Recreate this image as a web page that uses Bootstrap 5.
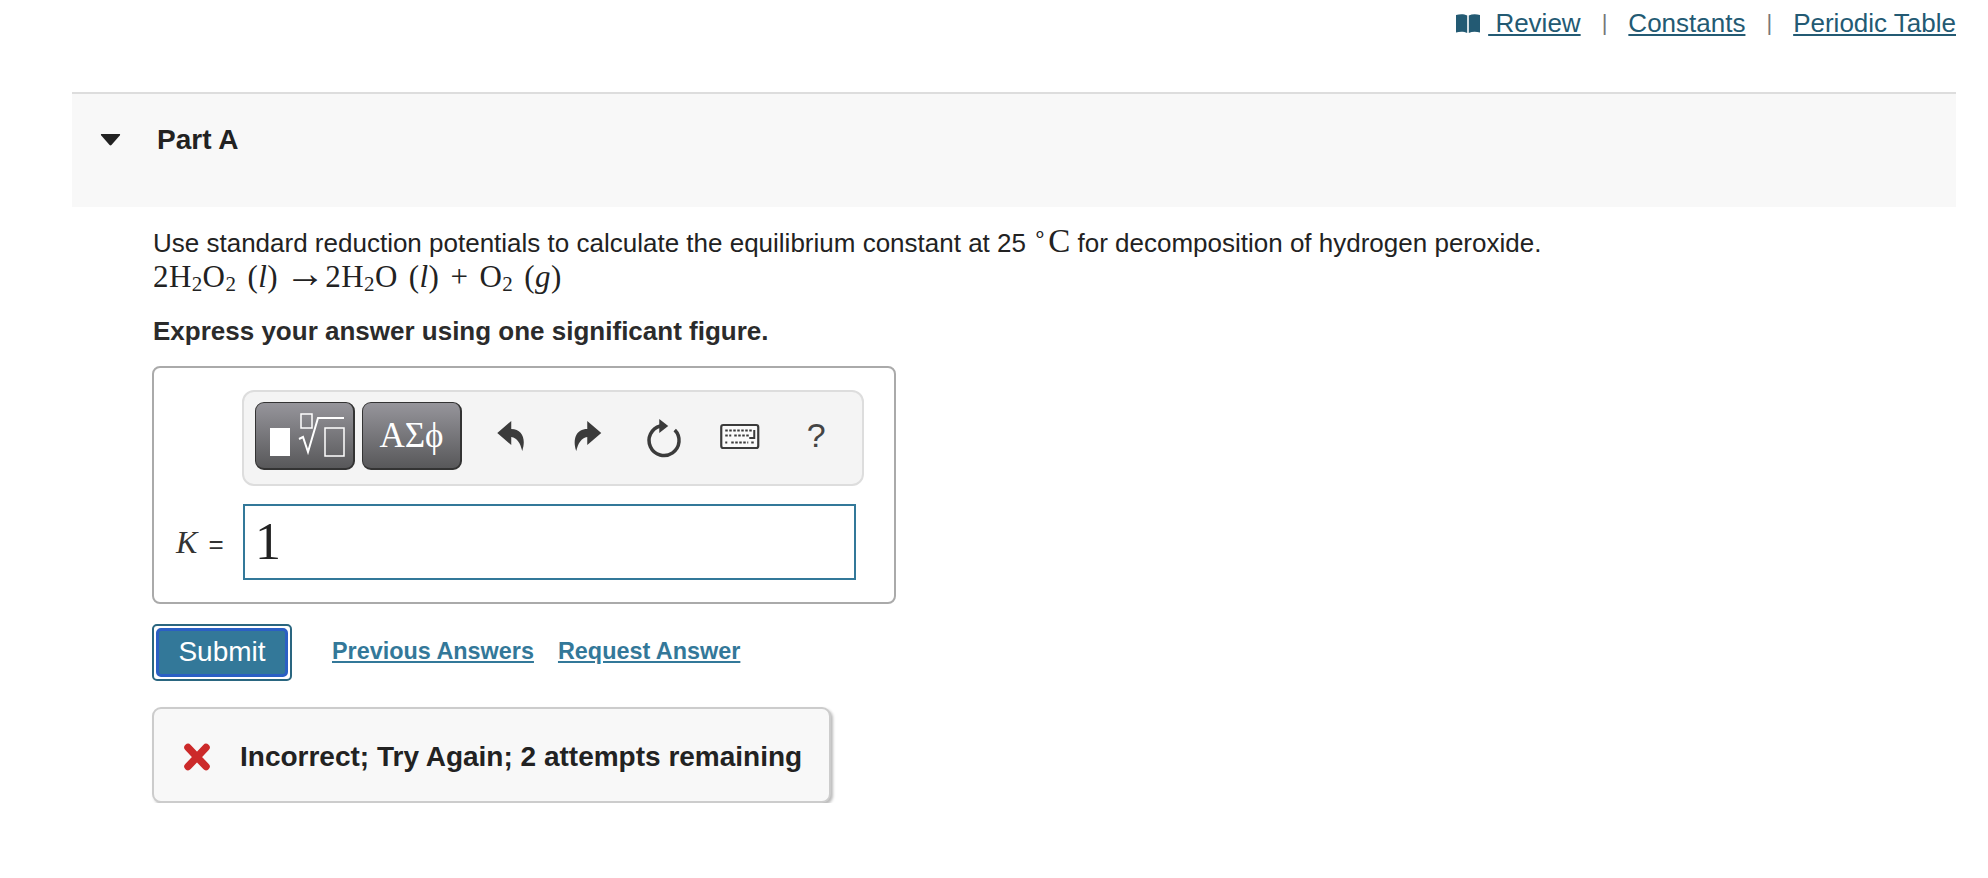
<!DOCTYPE html>
<html lang="en">
<head>
  <meta charset="UTF-8" />
  <title>Part A</title>
  <link href="https://cdn.jsdelivr.net/npm/bootstrap@5.3.3/dist/css/bootstrap.min.css" rel="stylesheet"/>
  <style>
    body {
      font-family: "Liberation Sans", Arial, sans-serif;
      font-size: 26px;
      color: #222;
      background: #fff;
      overflow: hidden;
    }
    .top-links {
      height: 92px;
      padding: 7px 32px 0 0;
      line-height: 32px;
      color: #777;
    }
    .top-links a { color: #235a73; }
    .top-sep { margin: 0 21px 0 21px; font-size: 22px; }
    .book-icon { margin-right: 8px; margin-top: 7px; }
    .part-wrap { margin: 0 32px 0 72px; }
    .part-head {
      height: 115px;
      background: #f8f8f8;
      border-top: 2px solid #ddd;
      padding: 28px 0 0 28px;
    }
    .tri-icon { margin-top: 12px; }
    .part-title { font-size: 28px; font-weight: 700; line-height: 36px; margin-left: 36px; color: #222; }
    .part-body { padding: 20px 0 0 81px; }
    .intro { line-height: 32px; }
    .deg { font-family: "Liberation Serif", serif; font-size: 33px; line-height: 0; }
    .deg sup { font-size: 22px; top: -.5em; margin-right: 1px; }
    .formula { font-family: "Liberation Serif", serif; font-size: 31px; line-height: 35px; letter-spacing: .4px; word-spacing: 3px; }
    .formula sub { font-size: 21px; bottom: -.2em; }
    .formula-arrow { font-size: 40px; line-height: 0; margin-left: 7px; }
    .hint { font-weight: 700; margin: 19px 0 0; line-height: 36px; color: #2b2b2b; }
    .answer-box {
      width: 744px;
      height: 238px;
      margin: 17px 0 0 -1px;
      border: 2px solid #aaa;
      border-radius: 8px;
      padding: 22px 29px 0 0;
    }
    .tool-bar {
      width: 622px;
      height: 96px;
      margin-left: 88px;
      background: #f4f4f4;
      border: 2px solid #ddd;
      border-radius: 12px;
      padding: 10px 0 0 11px;
    }
    .math-btn {
      width: 100px;
      height: 68px;
      padding: 0;
      margin-right: 7px;
      border: 1px solid #333;
      border-bottom-width: 2px;
      border-right-width: 2px;
      border-radius: 9px;
      background: linear-gradient(#96959b, #58585a);
      color: #fff;
      font-family: "Liberation Serif", serif;
      font-size: 35px;
      line-height: 1;
    }
    .tool-icon { width: 76.500px; height: 68px; flex: none; }
    .tool-first { margin-left: 3px; }
    .tool-q { font-size: 34px; color: #444; text-align: center; line-height: 66px; }
    .answer-row { margin-top: 18px; }
    .k-label { width: 89px; padding-left: 22px; font-size: 26px; white-space: nowrap; color: #333; line-height: 1; }
    .k-label i { font-family: "Liberation Serif", serif; font-size: 32px; margin-right: 4px; }
    .answer-input {
      width: 613px;
      height: 76px;
      border: 2px solid #337899;
      border-radius: 0;
      font-family: "Liberation Serif", serif;
      font-size: 52px;
      padding: 0 10px;
      color: #222;
    }
    .submit-row { margin: 20px 0 0 -1px; }
    .submit-outer {
      width: 140px;
      height: 57px;
      border: 2px solid #2a6680;
      border-radius: 5px;
      padding: 2px;
      background: #fff;
    }
    .submit-btn {
      width: 100%;
      height: 100%;
      padding: 0 0 2px;
      background: #337899;
      border: 3px solid #2b5fc4;
      border-radius: 5px;
      color: #fff;
      font-size: 28px;
      line-height: 1;
    }
    .answer-link { color: #337899; font-weight: 700; font-size: 23.400px; margin-left: 24px; margin-top: -2px; }
    .submit-outer + .answer-link { margin-left: 40px; }
    .feedback {
      width: 679px;
      height: 96px;
      margin: 26px 0 0 -1px;
      background: #f8f8f8;
      border: 2px solid #ccc;
      border-radius: 9px;
      box-shadow: 2px 2px 3px #bbb;
      padding: 3px 0 0 29px;
      font-size: 28px;
      font-weight: 700;
      color: #222;
    }
    .feedback svg { margin-right: 29px; }
  </style>
</head>
<body>
  <!-- Top links -->
  <div class="top-links d-flex justify-content-end align-items-start">
    <svg class="book-icon" width="24" height="19" viewBox="0 0 24 19"><path fill="#235a73" d="M0 1C4 0 8 0 11.200 1.500V19C8 17.500 4 17.500 0 18.500ZM24 1C20 0 16 0 12.800 1.500V19C16 17.500 20 17.500 24 18.500Z"/></svg>
    <a href="#">&nbsp;Review</a><span class="top-sep">|</span>
    <a href="#">Constants</a><span class="top-sep">|</span>
    <a href="#">Periodic Table</a>
  </div>

  <div class="part-wrap">
    <div class="part-head d-flex align-items-start">
      <svg class="tri-icon" width="21" height="12" viewBox="0 0 22 13"><path fill="#222" d="M1 0H21Q22 0 21 1.500L12 12Q11 13 10 12L1 1.500Q0 0 1 0Z"/></svg>
      <div class="part-title">Part A</div>
    </div>

    <div class="part-body">
      <div class="intro">Use standard reduction potentials to calculate the equilibrium constant at 25 <span class="deg"><sup>∘</sup>C</span> for decomposition of hydrogen peroxide.</div>
      <div class="formula">2H<sub>2</sub>O<sub>2</sub> (<i>l</i>)<span class="formula-arrow">→</span>2H<sub>2</sub>O (<i>l</i>) + O<sub>2</sub> (<i>g</i>)</div>
      <p class="hint">Express your answer using one significant figure.</p>

      <div class="answer-box">
        <div class="tool-bar d-flex align-items-start">
          <button class="btn math-btn d-flex align-items-center justify-content-center" type="button" aria-label="Templates">
            <svg width="86" height="56" viewBox="0 0 86 56" fill="none" stroke="#fff">
              <rect x="8" y="20" width="20" height="28" fill="#fff" stroke="none"/>
              <rect x="39" y="6" width="11" height="14" stroke-width="1.500"/>
              <path d="M37 31L41 29L46 44L56 10H82" stroke-width="2"/>
              <rect x="63" y="20" width="19" height="28" stroke-width="1.500"/>
            </svg>
          </button>
          <button class="btn math-btn" type="button">ΑΣϕ</button>
          <svg class="tool-icon tool-first" viewBox="0 0 76 68"><path fill="#3b3b3b" d="M25 31L39 19V27C50 27 54 37 50 49C48 41 45 36 39 35V43Z"/></svg>
          <svg class="tool-icon" viewBox="0 0 76 68"><path fill="#3b3b3b" d="M52 31L38 19V27C27 27 23 37 27 49C29 41 32 36 38 35V43Z"/></svg>
          <svg class="tool-icon" viewBox="0 0 76 68">
            <path d="M35 24A15 15 0 1 0 49.500 28" fill="none" stroke="#3b3b3b" stroke-width="3.500"/>
            <path fill="#3b3b3b" d="M34 17L43 24L34 31Z"/>
          </svg>
          <svg class="tool-icon" viewBox="0 0 76 68">
            <rect x="19" y="23" width="37" height="23" rx="2" fill="#fafafa" stroke="#3b3b3b" stroke-width="2.200"/>
            <path d="M23 28.500H50M23 33.500H29M32 33.500H47M23 40.500H25M29 40.500H46M49 40.500H52" fill="none" stroke="#3b3b3b" stroke-width="2.200" stroke-dasharray="2.500 1.500"/>
            <path d="M52 28V36H47" fill="none" stroke="#3b3b3b" stroke-width="2"/>
          </svg>
          <div class="tool-icon tool-q">?</div>
        </div>
        <div class="answer-row d-flex align-items-center">
          <div class="k-label"><i>K</i> =</div>
          <input class="form-control answer-input" type="text" value="1" aria-label="K"/>
        </div>
      </div>

      <div class="submit-row d-flex align-items-center">
        <div class="submit-outer"><button class="btn submit-btn" type="button">Submit</button></div>
        <a class="answer-link" href="#">Previous Answers</a>
        <a class="answer-link" href="#">Request Answer</a>
      </div>

      <div class="feedback d-flex align-items-center">
        <svg width="28" height="28" viewBox="0 0 28 28"><path fill="none" stroke="#cc2a2a" stroke-width="7.500" stroke-linecap="round" d="M5 4.500L23 23.500M23 4.500L5 23.500"/></svg>
        <span>Incorrect; Try Again; 2 attempts remaining</span>
      </div>
    </div>
  </div>
</body>
</html>
